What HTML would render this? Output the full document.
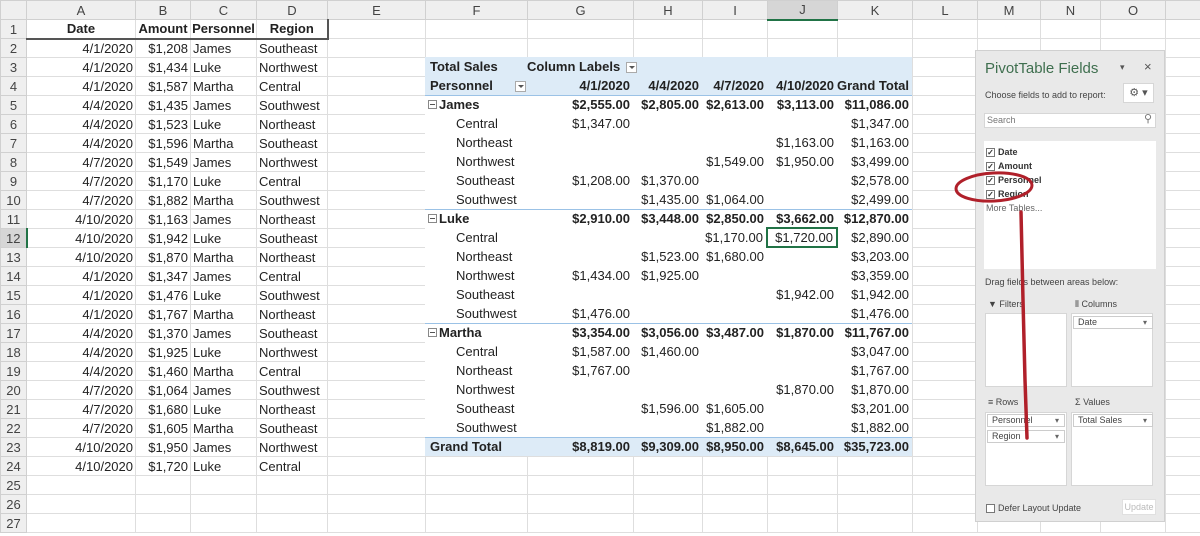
<!DOCTYPE html>
<html><head><meta charset="utf-8"><style>
*{margin:0;padding:0;box-sizing:border-box}
body{width:1200px;height:536px;overflow:hidden;background:#fff;font-family:"Liberation Sans",Arial,sans-serif;font-size:13px;color:#222;position:relative}
table{border-collapse:collapse;table-layout:fixed;position:absolute;left:0;top:0;width:1200px}
td{height:19px;border:1px solid #dedede;white-space:nowrap;overflow:hidden;padding:0 2px;line-height:17px}
tr.h td{background:#efefef;text-align:center;color:#444;border-color:#d0d0d0;font-size:13px}
td.rh{background:#efefef;text-align:center;color:#444;border-color:#d0d0d0;padding:0;font-size:13px}
.r{text-align:right}.b{font-weight:bold}.c{text-align:center}
#pv{position:absolute;left:425px;top:57px;width:487px;background:#fff;overflow:hidden;font-size:13px}
#pv table{position:static;width:487px}
#pv td{border:none;height:19px;padding:0 3px 0 0;overflow:visible}
.bl td{background:#ddebf7}
.tb td{border-top:1px solid #9bc2e6 !important}
.ind{padding-left:31px !important}
.dd{display:inline-block;width:11px;height:11px;border:1px solid #aaa;background:#fff;vertical-align:middle;margin-left:6px;position:relative}
.dd:after{content:"";position:absolute;left:2px;top:3px;border:3px solid transparent;border-top:3px solid #555}
.mn{display:inline-block;width:9px;height:9px;border:1px solid #888;vertical-align:middle;margin:0 2px 0 3px;position:relative;top:-1px}
.mn:after{content:"";position:absolute;left:1px;top:3px;width:5px;height:1px;background:#555}
#pn{position:absolute;left:975px;top:50px;width:190px;height:472px;background:#e9e9e9;border:1px solid #d0d0d0;font-size:9px;color:#444}
#pn .w{position:absolute;background:#fff;border:1px solid #d6d6d6}
.chk{display:inline-block;width:9px;height:9px;border:1px solid #777;background:#fff;vertical-align:middle;margin-right:3px;font-size:8px;line-height:7px;text-align:center}
.fld{position:absolute;background:#fff;border:1px solid #ccc;height:13px;line-height:11px;padding-left:4px;font-size:9px}
.fld:after{content:"▾";position:absolute;right:5px;top:0;font-size:8px;color:#666}
</style></head><body>
<table>
<colgroup><col style="width:26px"><col style="width:109px"><col style="width:55px"><col style="width:66px"><col style="width:71px"><col style="width:98px"><col style="width:102px"><col style="width:106px"><col style="width:69px"><col style="width:65px"><col style="width:70px"><col style="width:75px"><col style="width:65px"><col style="width:63px"><col style="width:60px"><col style="width:65px"><col style="width:35px"></colgroup>
<tr class="h"><td></td><td>A</td><td>B</td><td>C</td><td>D</td><td>E</td><td>F</td><td>G</td><td>H</td><td>I</td><td style="background:#d6d6d6;border-bottom:2px solid #217346">J</td><td>K</td><td>L</td><td>M</td><td>N</td><td>O</td><td></td></tr>
<tr><td class="rh">1</td><td class="c b" style="border-bottom:2px solid #555">Date</td><td class="c b" style="border-bottom:2px solid #555">Amount</td><td class="c b" style="border-bottom:2px solid #555;padding:0">Personnel</td><td class="c b" style="border-bottom:2px solid #555;border-right:2px solid #555">Region</td><td></td><td></td><td></td><td></td><td></td><td></td><td></td><td></td><td></td><td></td><td></td><td></td></tr>
<tr><td class="rh">2</td><td class="r">4/1/2020</td><td class="r">$1,208</td><td>James</td><td>Southeast</td><td></td><td></td><td></td><td></td><td></td><td></td><td></td><td></td><td></td><td></td><td></td><td></td></tr>
<tr><td class="rh">3</td><td class="r">4/1/2020</td><td class="r">$1,434</td><td>Luke</td><td>Northwest</td><td></td><td></td><td></td><td></td><td></td><td></td><td></td><td></td><td></td><td></td><td></td><td></td></tr>
<tr><td class="rh">4</td><td class="r">4/1/2020</td><td class="r">$1,587</td><td>Martha</td><td>Central</td><td></td><td></td><td></td><td></td><td></td><td></td><td></td><td></td><td></td><td></td><td></td><td></td></tr>
<tr><td class="rh">5</td><td class="r">4/4/2020</td><td class="r">$1,435</td><td>James</td><td>Southwest</td><td></td><td></td><td></td><td></td><td></td><td></td><td></td><td></td><td></td><td></td><td></td><td></td></tr>
<tr><td class="rh">6</td><td class="r">4/4/2020</td><td class="r">$1,523</td><td>Luke</td><td>Northeast</td><td></td><td></td><td></td><td></td><td></td><td></td><td></td><td></td><td></td><td></td><td></td><td></td></tr>
<tr><td class="rh">7</td><td class="r">4/4/2020</td><td class="r">$1,596</td><td>Martha</td><td>Southeast</td><td></td><td></td><td></td><td></td><td></td><td></td><td></td><td></td><td></td><td></td><td></td><td></td></tr>
<tr><td class="rh">8</td><td class="r">4/7/2020</td><td class="r">$1,549</td><td>James</td><td>Northwest</td><td></td><td></td><td></td><td></td><td></td><td></td><td></td><td></td><td></td><td></td><td></td><td></td></tr>
<tr><td class="rh">9</td><td class="r">4/7/2020</td><td class="r">$1,170</td><td>Luke</td><td>Central</td><td></td><td></td><td></td><td></td><td></td><td></td><td></td><td></td><td></td><td></td><td></td><td></td></tr>
<tr><td class="rh">10</td><td class="r">4/7/2020</td><td class="r">$1,882</td><td>Martha</td><td>Southwest</td><td></td><td></td><td></td><td></td><td></td><td></td><td></td><td></td><td></td><td></td><td></td><td></td></tr>
<tr><td class="rh">11</td><td class="r">4/10/2020</td><td class="r">$1,163</td><td>James</td><td>Northeast</td><td></td><td></td><td></td><td></td><td></td><td></td><td></td><td></td><td></td><td></td><td></td><td></td></tr>
<tr><td class="rh" style="background:#d6d6d6;border-right:2px solid #217346">12</td><td class="r">4/10/2020</td><td class="r">$1,942</td><td>Luke</td><td>Southeast</td><td></td><td></td><td></td><td></td><td></td><td></td><td></td><td></td><td></td><td></td><td></td><td></td></tr>
<tr><td class="rh">13</td><td class="r">4/10/2020</td><td class="r">$1,870</td><td>Martha</td><td>Northeast</td><td></td><td></td><td></td><td></td><td></td><td></td><td></td><td></td><td></td><td></td><td></td><td></td></tr>
<tr><td class="rh">14</td><td class="r">4/1/2020</td><td class="r">$1,347</td><td>James</td><td>Central</td><td></td><td></td><td></td><td></td><td></td><td></td><td></td><td></td><td></td><td></td><td></td><td></td></tr>
<tr><td class="rh">15</td><td class="r">4/1/2020</td><td class="r">$1,476</td><td>Luke</td><td>Southwest</td><td></td><td></td><td></td><td></td><td></td><td></td><td></td><td></td><td></td><td></td><td></td><td></td></tr>
<tr><td class="rh">16</td><td class="r">4/1/2020</td><td class="r">$1,767</td><td>Martha</td><td>Northeast</td><td></td><td></td><td></td><td></td><td></td><td></td><td></td><td></td><td></td><td></td><td></td><td></td></tr>
<tr><td class="rh">17</td><td class="r">4/4/2020</td><td class="r">$1,370</td><td>James</td><td>Southeast</td><td></td><td></td><td></td><td></td><td></td><td></td><td></td><td></td><td></td><td></td><td></td><td></td></tr>
<tr><td class="rh">18</td><td class="r">4/4/2020</td><td class="r">$1,925</td><td>Luke</td><td>Northwest</td><td></td><td></td><td></td><td></td><td></td><td></td><td></td><td></td><td></td><td></td><td></td><td></td></tr>
<tr><td class="rh">19</td><td class="r">4/4/2020</td><td class="r">$1,460</td><td>Martha</td><td>Central</td><td></td><td></td><td></td><td></td><td></td><td></td><td></td><td></td><td></td><td></td><td></td><td></td></tr>
<tr><td class="rh">20</td><td class="r">4/7/2020</td><td class="r">$1,064</td><td>James</td><td>Southwest</td><td></td><td></td><td></td><td></td><td></td><td></td><td></td><td></td><td></td><td></td><td></td><td></td></tr>
<tr><td class="rh">21</td><td class="r">4/7/2020</td><td class="r">$1,680</td><td>Luke</td><td>Northeast</td><td></td><td></td><td></td><td></td><td></td><td></td><td></td><td></td><td></td><td></td><td></td><td></td></tr>
<tr><td class="rh">22</td><td class="r">4/7/2020</td><td class="r">$1,605</td><td>Martha</td><td>Southeast</td><td></td><td></td><td></td><td></td><td></td><td></td><td></td><td></td><td></td><td></td><td></td><td></td></tr>
<tr><td class="rh">23</td><td class="r">4/10/2020</td><td class="r">$1,950</td><td>James</td><td>Northwest</td><td></td><td></td><td></td><td></td><td></td><td></td><td></td><td></td><td></td><td></td><td></td><td></td></tr>
<tr><td class="rh">24</td><td class="r">4/10/2020</td><td class="r">$1,720</td><td>Luke</td><td>Central</td><td></td><td></td><td></td><td></td><td></td><td></td><td></td><td></td><td></td><td></td><td></td><td></td></tr>
<tr><td class="rh">25</td><td></td><td></td><td></td><td></td><td></td><td></td><td></td><td></td><td></td><td></td><td></td><td></td><td></td><td></td><td></td><td></td></tr>
<tr><td class="rh">26</td><td></td><td></td><td></td><td></td><td></td><td></td><td></td><td></td><td></td><td></td><td></td><td></td><td></td><td></td><td></td><td></td></tr>
<tr><td class="rh">27</td><td></td><td></td><td></td><td></td><td></td><td></td><td></td><td></td><td></td><td></td><td></td><td></td><td></td><td></td><td></td><td></td></tr>
</table>

<div id="pv"><table>
<colgroup><col style="width:102px"><col style="width:106px"><col style="width:69px"><col style="width:65px"><col style="width:70px"><col style="width:75px"></colgroup>
<tr class="bl"><td class="b" style="padding-left:5px">Total Sales</td><td class="b">Column Labels<span class="dd"></span></td><td></td><td></td><td></td><td></td></tr>
<tr class="bl"><td class="b" style="padding-left:5px">Personnel<span class="dd" style="margin-left:22px"></span></td><td class="b r">4/1/2020</td><td class="b r">4/4/2020</td><td class="b r">4/7/2020</td><td class="b r">4/10/2020</td><td class="b r">Grand Total</td></tr>
<tr class="tb b"><td><span class="mn"></span>James</td><td class="r">$2,555.00</td><td class="r">$2,805.00</td><td class="r">$2,613.00</td><td class="r">$3,113.00</td><td class="r">$11,086.00</td></tr>
<tr><td class="ind">Central</td><td class="r">$1,347.00</td><td></td><td></td><td></td><td class="r">$1,347.00</td></tr>
<tr><td class="ind">Northeast</td><td></td><td></td><td></td><td class="r">$1,163.00</td><td class="r">$1,163.00</td></tr>
<tr><td class="ind">Northwest</td><td></td><td></td><td class="r">$1,549.00</td><td class="r">$1,950.00</td><td class="r">$3,499.00</td></tr>
<tr><td class="ind">Southeast</td><td class="r">$1,208.00</td><td class="r">$1,370.00</td><td></td><td></td><td class="r">$2,578.00</td></tr>
<tr><td class="ind">Southwest</td><td></td><td class="r">$1,435.00</td><td class="r">$1,064.00</td><td></td><td class="r">$2,499.00</td></tr>
<tr class="tb b"><td><span class="mn"></span>Luke</td><td class="r">$2,910.00</td><td class="r">$3,448.00</td><td class="r">$2,850.00</td><td class="r">$3,662.00</td><td class="r">$12,870.00</td></tr>
<tr><td class="ind">Central</td><td></td><td></td><td class="r">$1,170.00</td><td class="r" style="border:2px solid #217346">$1,720.00</td><td class="r">$2,890.00</td></tr>
<tr><td class="ind">Northeast</td><td></td><td class="r">$1,523.00</td><td class="r">$1,680.00</td><td></td><td class="r">$3,203.00</td></tr>
<tr><td class="ind">Northwest</td><td class="r">$1,434.00</td><td class="r">$1,925.00</td><td></td><td></td><td class="r">$3,359.00</td></tr>
<tr><td class="ind">Southeast</td><td></td><td></td><td></td><td class="r">$1,942.00</td><td class="r">$1,942.00</td></tr>
<tr><td class="ind">Southwest</td><td class="r">$1,476.00</td><td></td><td></td><td></td><td class="r">$1,476.00</td></tr>
<tr class="tb b"><td><span class="mn"></span>Martha</td><td class="r">$3,354.00</td><td class="r">$3,056.00</td><td class="r">$3,487.00</td><td class="r">$1,870.00</td><td class="r">$11,767.00</td></tr>
<tr><td class="ind">Central</td><td class="r">$1,587.00</td><td class="r">$1,460.00</td><td></td><td></td><td class="r">$3,047.00</td></tr>
<tr><td class="ind">Northeast</td><td class="r">$1,767.00</td><td></td><td></td><td></td><td class="r">$1,767.00</td></tr>
<tr><td class="ind">Northwest</td><td></td><td></td><td></td><td class="r">$1,870.00</td><td class="r">$1,870.00</td></tr>
<tr><td class="ind">Southeast</td><td></td><td class="r">$1,596.00</td><td class="r">$1,605.00</td><td></td><td class="r">$3,201.00</td></tr>
<tr><td class="ind">Southwest</td><td></td><td></td><td class="r">$1,882.00</td><td></td><td class="r">$1,882.00</td></tr>
<tr class="bl tb b"><td style="padding-left:5px">Grand Total</td><td class="r">$8,819.00</td><td class="r">$9,309.00</td><td class="r">$8,950.00</td><td class="r">$8,645.00</td><td class="r">$35,723.00</td></tr>
</table></div>

<div id="pn">
<div style="position:absolute;left:9px;top:9px;font-size:15px;color:#3f6f4f">PivotTable Fields</div>
<div style="position:absolute;left:144px;top:11px;font-size:9px;color:#555">▾</div>
<div style="position:absolute;left:168px;top:8px;font-size:13px;color:#555">×</div>
<div style="position:absolute;left:9px;top:39px">Choose fields to add to report:</div>
<div class="w" style="left:147px;top:32px;width:31px;height:20px;font-size:11px;line-height:18px;text-align:center;color:#555">⚙ ▾</div>
<div class="w" style="left:8px;top:62px;width:172px;height:15px;padding-left:2px;line-height:13px;color:#777">Search<span style="position:absolute;right:3px;top:-1px;font-size:11px">⚲</span></div>
<div class="w" style="left:8px;top:90px;width:172px;height:128px;border:none;padding:4px 2px;line-height:14px;font-weight:bold;color:#333">
<div><span class="chk">✓</span>Date</div><div><span class="chk">✓</span>Amount</div><div><span class="chk">✓</span>Personnel</div><div><span class="chk">✓</span>Region</div><div style="font-weight:normal;color:#666">More Tables...</div></div>
<div style="position:absolute;left:9px;top:226px">Drag fields between areas below:</div>
<div style="position:absolute;left:12px;top:248px">▼ Filters</div>
<div style="position:absolute;left:99px;top:248px">⦀ Columns</div>
<div class="w" style="left:9px;top:262px;width:82px;height:74px"></div>
<div class="w" style="left:95px;top:262px;width:82px;height:74px"></div>
<div class="fld" style="left:97px;top:265px;width:80px">Date</div>
<div style="position:absolute;left:12px;top:346px">≡ Rows</div>
<div style="position:absolute;left:99px;top:346px">Σ Values</div>
<div class="w" style="left:9px;top:361px;width:82px;height:74px"></div>
<div class="w" style="left:95px;top:361px;width:82px;height:74px"></div>
<div class="fld" style="left:11px;top:363px;width:78px">Personnel</div>
<div class="fld" style="left:11px;top:379px;width:78px">Region</div>
<div class="fld" style="left:97px;top:363px;width:80px">Total Sales</div>
<div style="position:absolute;left:10px;top:452px"><span class="chk"></span>Defer Layout Update</div>
<div class="w" style="left:146px;top:448px;width:34px;height:16px;line-height:14px;text-align:center;color:#bbb;border-color:#e0e0e0">Update</div>
</div>
<svg style="position:absolute;left:0;top:0" width="1200" height="536">
<ellipse cx="994" cy="187" rx="38" ry="14" fill="none" stroke="#b0202a" stroke-width="3" transform="rotate(-3 994 187)"/>
<path d="M1021 212 L1023 300 L1025 380 L1027 438" fill="none" stroke="#b0202a" stroke-width="3.5" stroke-linecap="round"/>
</svg>
</body></html>
